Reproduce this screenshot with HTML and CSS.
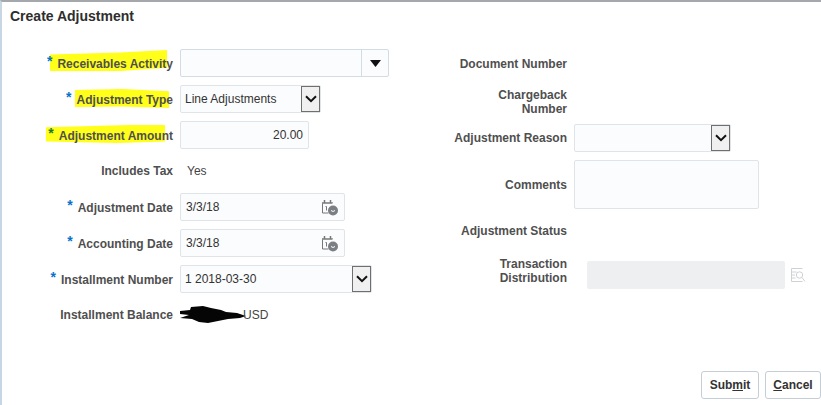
FILE: index.html
```html
<!DOCTYPE html>
<html lang="en">
<head>
<meta charset="utf-8">
<title>Create Adjustment</title>
<link rel="stylesheet" href="styles.css">
</head>
<body>
<main class="dialog">
  <h1 class="title">Create Adjustment</h1>
  <div class="columns">
    <section class="col-left">
      <div class="row">
        <label class="label"><span class="hl hl-a"></span><span class="req req-a">*</span><span class="lt">Receivables Activity</span></label>
        <div class="field combo"><span class="combo-btn"><svg width="11" height="7" viewBox="0 0 11 7"><path d="M0 0h11L5.500 7z" fill="#111"/></svg></span></div>
      </div>
      <div class="row">
        <label class="label"><span class="hl hl-b"></span><span class="req req-b">*</span><span class="lt">Adjustment Type</span></label>
        <div class="field select w-type"><span class="val">Line Adjustments</span><span class="sel-btn"><svg width="12" height="8" viewBox="0 0 12 8"><path d="M1 1.200l5 5 5-5" fill="none" stroke="#111" stroke-width="2"/></svg></span></div>
      </div>
      <div class="row">
        <label class="label"><span class="hl hl-c"></span><span class="req req-c">*</span><span class="lt">Adjustment Amount</span></label>
        <div class="field w-amt amount"><span class="val">20.00</span></div>
      </div>
      <div class="row">
        <label class="label"><span class="lt">Includes Tax</span></label>
        <span class="plain plain-yes">Yes</span>
      </div>
      <div class="row">
        <label class="label"><span class="req">*</span><span class="lt">Adjustment Date</span></label>
        <div class="field w-date date"><span class="val">3/3/18</span>
          <svg class="cal" width="18" height="17" viewBox="0 0 18 17"><path d="M1.500 3.500h10M1.500 3.500v10.500h6" fill="none" stroke="#777" stroke-width="1"/><path d="M1.500 3h10v2h-10z" fill="#999"/><path d="M3.500 1v3M9.500 1v3" stroke="#777" stroke-width="1.500"/><path d="M4.500 7.500h1v4" fill="none" stroke="#777"/><circle cx="12" cy="11.500" r="5" fill="#7b7f83"/><path d="M10 11.500l2 1 2-1" fill="none" stroke="#fff" stroke-width="1"/></svg>
        </div>
      </div>
      <div class="row">
        <label class="label"><span class="req">*</span><span class="lt">Accounting Date</span></label>
        <div class="field w-date date"><span class="val">3/3/18</span>
          <svg class="cal" width="18" height="17" viewBox="0 0 18 17"><path d="M1.500 3.500h10M1.500 3.500v10.500h6" fill="none" stroke="#777" stroke-width="1"/><path d="M1.500 3h10v2h-10z" fill="#999"/><path d="M3.500 1v3M9.500 1v3" stroke="#777" stroke-width="1.500"/><path d="M4.500 7.500h1v4" fill="none" stroke="#777"/><circle cx="12" cy="11.500" r="5" fill="#7b7f83"/><path d="M10 11.500l2 1 2-1" fill="none" stroke="#fff" stroke-width="1"/></svg>
        </div>
      </div>
      <div class="row">
        <label class="label"><span class="req">*</span><span class="lt">Installment Number</span></label>
        <div class="field select w-inst"><span class="val">1 2018-03-30</span><span class="sel-btn"><svg width="12" height="8" viewBox="0 0 12 8"><path d="M1 1.200l5 5 5-5" fill="none" stroke="#111" stroke-width="2"/></svg></span></div>
      </div>
      <div class="row">
        <label class="label"><span class="lt">Installment Balance</span></label>
        <span class="plain balance"><svg class="blob" width="66" height="18" viewBox="0 0 66 18"><path d="M0 5l10-1 1-3 12-1 8 2 10 2 5 2 11 1 9 3-6 2-12 1-10 2-10 2-9-1-7-3-12-1 9-3-9-1z" fill="#050505"/></svg>USD</span>
      </div>
    </section>
    <section class="col-right">
      <div class="rrow r-doc"><span class="rlabel">Document Number</span></div>
      <div class="rrow r-charge"><span class="rlabel">Chargeback<br>Number</span></div>
      <div class="rrow r-reason"><span class="rlabel">Adjustment Reason</span>
        <div class="field select w-reason"><span class="val"></span><span class="sel-btn"><svg width="12" height="8" viewBox="0 0 12 8"><path d="M1 1.200l5 5 5-5" fill="none" stroke="#111" stroke-width="2"/></svg></span></div>
      </div>
      <div class="rrow r-comments"><span class="rlabel">Comments</span><div class="field area"></div></div>
      <div class="rrow r-status"><span class="rlabel">Adjustment Status</span></div>
      <div class="rrow r-dist"><span class="rlabel">Transaction<br>Distribution</span>
        <div class="disabled"></div>
        <svg class="lookup" width="16" height="16" viewBox="0 0 16 16"><path d="M1.500 1.500h11M1.500 1.500v13h11M1.500 5h5M1.500 8h3.500M1.500 11h4" fill="none" stroke="#cfd2d4"/><circle cx="9.500" cy="8" r="3.200" fill="#fff" stroke="#cfd2d4"/><path d="M12 10.500l3 4" stroke="#cfd2d4"/></svg>
      </div>
    </section>
  </div>
  <footer class="actions">
    <button class="btn btn-submit" type="button">Sub<u>m</u>it</button>
    <button class="btn btn-cancel" type="button"><u>C</u>ancel</button>
  </footer>
</main>
</body>
</html>
```
FILE: styles.css
```css
* { box-sizing: border-box; }
html, body { margin: 0; padding: 0; }
body {
  width: 821px;
  height: 405px;
  overflow: hidden;
  background: #fff;
  font-family: "Liberation Sans", Arial, sans-serif;
  font-size: 12px;
  color: #4f4f4f;
}
.dialog {
  display: flex;
  flex-direction: column;
  height: 405px;
  border-top: 2px solid #a4a8ac;
  border-left: 2px solid #c8d5e2;
}
.title {
  flex: none;
  margin: 0;
  padding: 6px 0 0 8px;
  height: 47px;
  font-size: 14px;
  line-height: 16px;
  font-weight: 700;
  color: #2e2e2e;
}
.columns { flex: none; display: flex; height: 322px; }
.col-left { width: 442px; flex: none; display: flex; flex-direction: column; gap: 8px; }
.row { display: flex; align-items: center; height: 28px; gap: 7px; }
.label {
  position: relative;
  width: 171px;
  flex: none;
  display: flex;
  justify-content: flex-end;
  align-items: baseline;
  font-weight: 700;
}
.lt { position: relative; }
.req {
  position: relative;
  top: -2px;
  margin-right: 5px;
  color: #0572ce;
  font-size: 14px;
  font-weight: 700;
}
.hl { position: absolute; background: #ffff1a; }
.hl-a { right: 6px; width: 117px; top: -5px; height: 21px; clip-path: polygon(0 22%, 60% 12%, 100% 0, 100% 85%, 60% 100%, 0 100%); }
.hl-b { right: 4px; width: 94px; top: -2px; height: 19px; clip-path: polygon(0 5%, 50% 0, 100% 12%, 100% 100%, 50% 92%, 0 95%); }
.hl-c { right: 8px; width: 119px; top: -2px; height: 18px; clip-path: polygon(0 12%, 70% 0, 100% 0, 100% 92%, 60% 100%, 0 92%); }
.req-c { color: #1a7a2c; }
.field {
  display: flex;
  align-items: center;
  height: 28px;
  background: #fbfcfd;
  border: 1px solid #dfe4e8;
  border-radius: 2px;
  padding-left: 4px;
  color: #333;
}
.combo { width: 209px; justify-content: flex-end; padding: 0; border-color: #d3dce5; }
.combo-btn {
  width: 27px;
  height: 100%;
  border-left: 1px solid #d3dce5;
  display: flex;
  align-items: center;
  justify-content: center;
}
.select { justify-content: space-between; }
.val { flex: 1; }
.sel-btn {
  width: 19px;
  height: 26px;
  flex: none;
  background: #f0f0f0;
  border: 1px solid #6f6f6f;
  display: flex;
  align-items: center;
  justify-content: center;
}
.w-type { width: 141px; }
.w-amt { width: 129px; }
.amount .val { text-align: right; padding-right: 5px; }
.w-date { width: 165px; }
.date { padding-left: 5px; padding-right: 5px; }
.w-inst { width: 192px; }
.w-reason { width: 157px; }
.plain { color: #444; }
.plain-yes { padding-left: 7px; }
.balance { display: flex; align-items: center; }
.blob { margin-right: -3px; }
.col-right { flex: 1; }
.rrow { display: flex; align-items: center; gap: 7px; }
.rlabel { width: 123px; flex: none; text-align: right; font-weight: 700; line-height: 14px; }
.r-doc { height: 28px; padding-top: 1px; }
.r-charge { height: 28px; margin-top: 11px; }
.r-reason { height: 28px; margin-top: 8px; }
.r-comments { height: 49px; margin-top: 8px; }
.area { width: 185px; height: 49px; }
.r-status { height: 14px; margin-top: 15px; }
.r-dist { height: 28px; margin-top: 23px; }
.r-dist .rlabel { margin-bottom: 9px; }
.disabled { width: 198px; height: 28px; margin-left: 13px; background: #eeeff0; border-radius: 2px; }
.lookup { margin-left: -2px; }
.actions {
  flex: none;
  display: flex;
  justify-content: flex-end;
  gap: 6px;
}
.btn {
  height: 28px;
  padding: 0;
  font-family: inherit;
  font-size: 12px;
  font-weight: 700;
  color: #333;
  background: #fff;
  border: 1px solid #c4ced7;
  border-radius: 3px;
}
.btn-submit { width: 58px; }
.btn-cancel { width: 56px; }
```
